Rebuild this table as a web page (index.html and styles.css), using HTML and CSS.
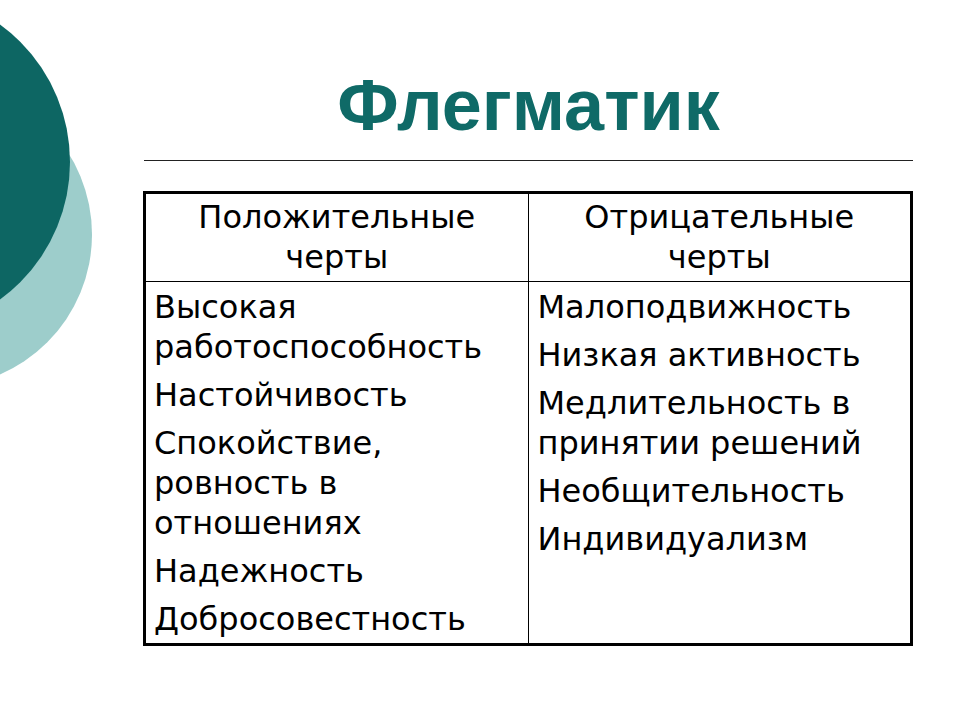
FILE: index.html
```html
<!DOCTYPE html>
<html lang="ru">
<head>
<meta charset="utf-8">
<title>Флегматик</title>
<link rel="stylesheet" href="styles.css">
</head>
<body>
<div class="slide">
  <div class="circle circle-light"></div>
  <div class="circle circle-dark"></div>
  <div class="content">
    <h1 class="title">Флегматик</h1>
    <div class="rule"></div>
    <table class="traits">
      <thead>
        <tr>
          <th>Положительные<br>черты</th>
          <th>Отрицательные<br>черты</th>
        </tr>
      </thead>
      <tbody>
        <tr>
          <td class="col-left">
            <p>Высокая работоспособность</p>
            <p>Настойчивость</p>
            <p>Спокойствие, ровность в отношениях</p>
            <p>Надежность</p>
            <p>Добросовестность</p>
          </td>
          <td>
            <p>Малоподвижность</p>
            <p>Низкая активность</p>
            <p>Медлительность в принятии решений</p>
            <p>Необщительность</p>
            <p>Индивидуализм</p>
          </td>
        </tr>
      </tbody>
    </table>
  </div>
</div>
</body>
</html>
```
FILE: styles.css
```css
html, body {
  margin: 0;
  padding: 0;
  background: #ffffff;
}

.slide {
  position: relative;
  width: 960px;
  height: 720px;
  overflow: hidden;
  background: #ffffff;
}

.circle {
  position: absolute;
  border-radius: 50%;
}

.circle-light {
  left: -213px;
  top: 82px;
  width: 305px;
  height: 305px;
  background: #9dcdcb;
}

.circle-dark {
  left: -270px;
  top: -8px;
  width: 340px;
  height: 340px;
  background: #0d6663;
}

.content {
  position: relative;
  margin-left: 144px;
  width: 769px;
  padding-top: 65px;
}

.title {
  margin: 0;
  height: 81px;
  line-height: 80px;
  font-family: "Liberation Sans", Arial, sans-serif;
  font-weight: bold;
  font-size: 72px;
  color: #0f6a67;
  text-align: center;
}

.rule {
  margin-top: 14px;
  height: 1px;
  background: #222222;
}

.traits {
  margin-top: 30px;
  margin-left: -1px;
  width: 770px;
  border-collapse: collapse;
  border: 3px solid #000000;
  font-family: "DejaVu Sans", Verdana, sans-serif;
  color: #000000;
  table-layout: fixed;
}

.traits th,
.traits td {
  border: 1px solid #000000;
  vertical-align: top;
}

.traits th {
  font-weight: normal;
  font-size: 32px;
  line-height: 40px;
  padding: 3px 2px 4px;
  text-align: center;
}

.traits td {
  font-size: 32px;
  line-height: 40px;
  padding: 5px 4px 4px 9px;
  text-align: left;
}

.traits td.col-left {
  padding-left: 8px;
}

.traits p {
  margin: 0 0 8px;
}

.traits p:last-child {
  margin-bottom: 0;
}
```
